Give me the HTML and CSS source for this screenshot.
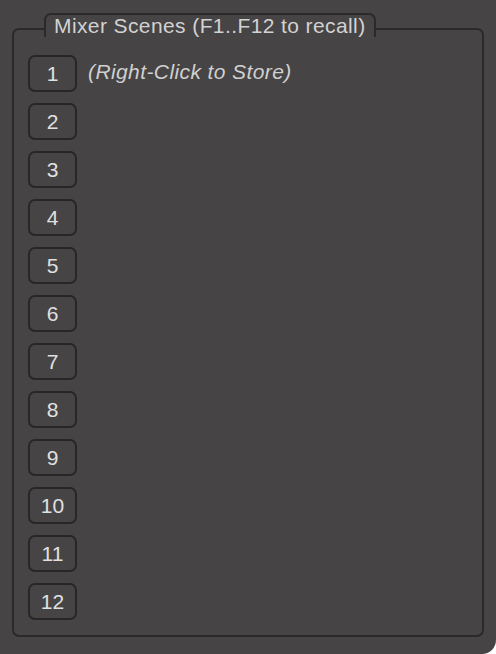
FILE: index.html
```html
<!DOCTYPE html>
<html lang="en">
<head>
  <meta charset="UTF-8" />
  <title>Mixer Scenes</title>
  <link rel="stylesheet" href="styles.css">
</head>
<body>
<div class="window">
  <div class="group-title">Mixer Scenes (F1..F12 to recall)</div>
  <div class="group">
    <div class="scene-row">
      <button class="scene-btn">1</button>
      <span class="hint">(Right-Click to Store)</span>
    </div>
    <div class="scene-row"><button class="scene-btn">2</button></div>
    <div class="scene-row"><button class="scene-btn">3</button></div>
    <div class="scene-row"><button class="scene-btn">4</button></div>
    <div class="scene-row"><button class="scene-btn">5</button></div>
    <div class="scene-row"><button class="scene-btn">6</button></div>
    <div class="scene-row"><button class="scene-btn">7</button></div>
    <div class="scene-row"><button class="scene-btn">8</button></div>
    <div class="scene-row"><button class="scene-btn">9</button></div>
    <div class="scene-row"><button class="scene-btn">10</button></div>
    <div class="scene-row"><button class="scene-btn">11</button></div>
    <div class="scene-row"><button class="scene-btn">12</button></div>
  </div>
</div>
</body>
</html>
```

FILE: styles.css
```css
  body {
    margin: 0;
    background: #fff;
    font-family: 'Liberation Sans', Arial, sans-serif;
  }

  .window {
    width: 496px;
    height: 654px;
    box-sizing: border-box;
    padding: 13px 12px 0 12px;
    background: #464445;
    border-bottom-right-radius: 14px;
  }

  .group-title {
    position: relative;
    z-index: 1;
    width: fit-content;
    margin-left: 32px;
    margin-bottom: -9px;
    padding: 0 8px;
    border: 2px solid #2b2a2a;
    border-bottom: none;
    border-radius: 7px 7px 0 0;
    background: #464445;
    color: #d2d2d2;
    font-size: 21px;
    line-height: 22px;
    letter-spacing: 0.4px;
  }

  .group {
    height: 609px;
    box-sizing: border-box;
    padding: 25px 0 0 14px;
    border: 2px solid #2b2a2a;
    border-radius: 7px;
    display: flex;
    flex-direction: column;
    gap: 11px;
  }

  .scene-row {
    display: flex;
    align-items: center;
    gap: 11px;
  }

  .scene-btn {
    width: 49px;
    height: 37px;
    padding: 0;
    border: 2px solid #282626;
    border-radius: 7px;
    background: transparent;
    color: #e0e0e0;
    font-family: 'Liberation Sans', Arial, sans-serif;
    font-size: 21px;
    cursor: pointer;
  }

  .hint {
    margin-bottom: 3px;
    color: #d0d0d0;
    font-size: 21px;
    font-style: italic;
    letter-spacing: 0.4px;
  }
```
